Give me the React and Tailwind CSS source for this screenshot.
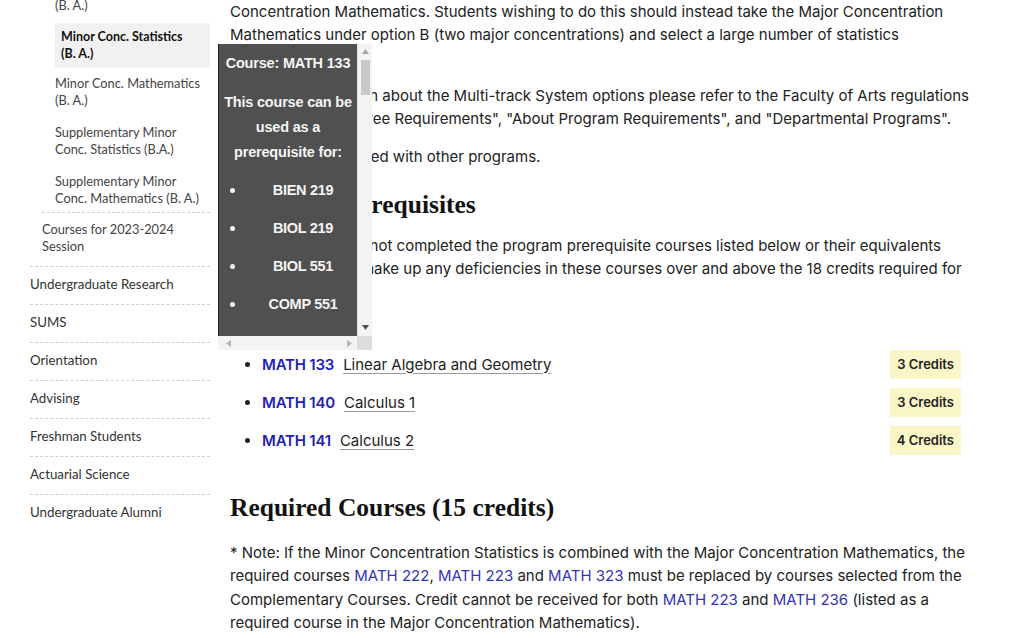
import React from 'react';

const nested = [
  { label: 'Minor Conc. Mathematics (B. A.)' },
  { label: 'Supplementary Minor Conc. Statistics (B.A.)' },
  { label: 'Supplementary Minor Conc. Mathematics (B. A.)' },
];

const topLinks = [
  'Undergraduate Research',
  'SUMS',
  'Orientation',
  'Advising',
  'Freshman Students',
  'Actuarial Science',
  'Undergraduate Alumni',
];

const prereqs = [
  { code: 'MATH 133', title: 'Linear Algebra and Geometry', credits: '3 Credits' },
  { code: 'MATH 140', title: 'Calculus 1', credits: '3 Credits' },
  { code: 'MATH 141', title: 'Calculus 2', credits: '4 Credits' },
];

const tooltipCourses = ['BIEN 219', 'BIOL 219', 'BIOL 551', 'COMP 551'];

function Sidebar() {
  return (
    <aside className="w-[180px] shrink-0 ml-[30px] -mt-[20px] font-['Lato',sans-serif]">
      <div className="ml-[12px]">
        <div className="pl-[13px] pr-[6px] text-[12.8px] leading-[17px] text-[#444] pb-[9px]">
          Major Conc. Statistics
          <br />
          (B. A.)
        </div>
        <div className="ml-[13px] bg-[#f1f1f1] px-[6px] pt-[5px] pb-[6px] text-[12.5px] leading-[17px] font-bold text-[#111]">
          Minor Conc. Statistics
          <br />
          (B. A.)
        </div>
        {nested.map((n) => (
          <div key={n.label} className="pl-[13px] pr-[2px] pt-[6px] pb-[8px] mt-[1px] text-[12.8px] leading-[17px] text-[#444]">
            {n.label}
          </div>
        ))}
        <div className="border-t border-dashed border-[#cfcfcf] mt-[-3px] pt-[8px] pb-[11px] text-[12.8px] leading-[17px] text-[#444]">
          Courses for 2023-2024
          <br />
          Session
        </div>
      </div>
      {topLinks.map((l) => (
        <div key={l} className="border-t border-dashed border-[#cfcfcf] h-[38px] flex items-center pb-[1px] text-[13.3px] text-[#333]">
          {l}
        </div>
      ))}
    </aside>
  );
}

function Tooltip() {
  return (
    <div className="absolute left-[218px] top-[44px] w-[154px] h-[306px] flex flex-col font-['Liberation_Sans',Arial,sans-serif]">
      <div className="flex flex-1 min-h-0">
        <div className="w-[139px] bg-[#505050] text-[#f4f4f4] font-bold text-[14.5px] overflow-hidden border-l border-[#222]">
          <div className="text-center leading-[25px] pt-[7px] tracking-[-0.2px]">Course: MATH 133</div>
          <div className="text-center leading-[25px] mt-[14px] tracking-[-0.2px]">
            This course can be
            <br />
            used as a
            <br />
            prerequisite for:
          </div>
          <ul className="mt-[7px]">
            {tooltipCourses.map((c) => (
              <li key={c} className="relative h-[38px] flex items-center justify-center pl-[30px] tracking-[-0.3px]">
                <span className="absolute left-[11px] top-[16px] w-[5px] h-[5px] rounded-full bg-[#f4f4f4]" />
                {c}
              </li>
            ))}
          </ul>
        </div>
        <div className="w-[15px] bg-[#f3f3f3] relative border-l border-[#e6e6e6]">
          <svg className="absolute left-[4px] top-[5px]" width="7" height="5" viewBox="0 0 7 5">
            <path d="M3.5 0 L7 5 L0 5 Z" fill="#a3a3a3" />
          </svg>
          <div className="absolute left-[3px] top-[16px] w-[9px] h-[35px] bg-[#c8c8c8]" />
          <svg className="absolute left-[4px] bottom-[6px]" width="7" height="5" viewBox="0 0 7 5">
            <path d="M0 0 L7 0 L3.5 5 Z" fill="#505050" />
          </svg>
        </div>
      </div>
      <div className="flex h-[14px]">
        <div className="w-[139px] bg-[#f3f3f3] relative">
          <svg className="absolute left-[8px] top-[4px]" width="5" height="7" viewBox="0 0 5 7">
            <path d="M0 3.5 L5 0 L5 7 Z" fill="#b5b5b5" />
          </svg>
          <svg className="absolute right-[5px] top-[4px]" width="5" height="7" viewBox="0 0 5 7">
            <path d="M0 0 L5 3.5 L0 7 Z" fill="#b5b5b5" />
          </svg>
        </div>
        <div className="w-[15px] bg-[#dcdcdc]" />
      </div>
    </div>
  );
}

function Link({ children }) {
  return <a className="text-[#3434c0]">{children}</a>;
}

export default function App() {
  return (
    <div className="relative w-[1020px] h-[638px] overflow-hidden bg-white">
      <div className="flex">
        <Sidebar />
        <main className="ml-[20px] w-[750px] font-['Inter',sans-serif] text-[15px] leading-[23px] text-[#222] whitespace-nowrap">
          <p>
            Concentration Mathematics. Students wishing to do this should instead take the Major Concentration
            <br />
            Mathematics under option B (two major concentrations) and select a large number of statistics
            <br />
            courses.
          </p>
          <p className="mt-[15px]">
            For more information about the Multi-track System options please refer to the Faculty of Arts regulations
            <br />
            under "Faculty Degree Requirements", "About Program Requirements", and "Departmental Programs".
          </p>
          <p className="mt-[15px]">This can be integrated with other programs.</p>
          <h2 className="mt-[22px] font-['Liberation_Serif',serif] font-bold text-[25.5px] leading-[30px] text-[#111]">
            Program Prerequisites
          </h2>
          <p className="mt-[14px]">
            Students who have not completed the program prerequisite courses listed below or their equivalents
            <br />
            will be required to make up any deficiencies in these courses over and above the 18 credits required for
            <br />
            the program.
          </p>
          <ul className="mt-[42px] w-[731px]">
            {prereqs.map((p) => (
              <li key={p.code} className="h-[38px] flex items-center justify-between">
                <div className="flex items-center">
                  <span className="w-[5px] h-[5px] rounded-full bg-[#222] ml-[15px] mr-[12px]" />
                  <span className="font-semibold text-[#1f1fb8] mr-[9px] tracking-[-0.2px]">{p.code}</span>
                  <span className="underline decoration-[#9a9a9a] underline-offset-[3px]">{p.title}</span>
                </div>
                <span className="bg-[#fbf6c8] h-[29px] px-[7px] flex items-center text-[13px] font-semibold text-[#222]">
                  {p.credits}
                </span>
              </li>
            ))}
          </ul>
          <h2 className="mt-[34px] font-['Liberation_Serif',serif] font-bold text-[25.5px] leading-[30px] text-[#111]">
            Required Courses (15 credits)
          </h2>
          <p className="mt-[18px] leading-[23.4px]">
            * Note: If the Minor Concentration Statistics is combined with the Major Concentration Mathematics, the
            <br />
            required courses <Link>MATH 222</Link>, <Link>MATH 223</Link> and <Link>MATH 323</Link> must be replaced by
            courses selected from the
            <br />
            Complementary Courses. Credit cannot be received for both <Link>MATH 223</Link> and{' '}
            <Link>MATH 236</Link> (listed as a
            <br />
            required course in the Major Concentration Mathematics).
          </p>
        </main>
      </div>
      <Tooltip />
    </div>
  );
}
